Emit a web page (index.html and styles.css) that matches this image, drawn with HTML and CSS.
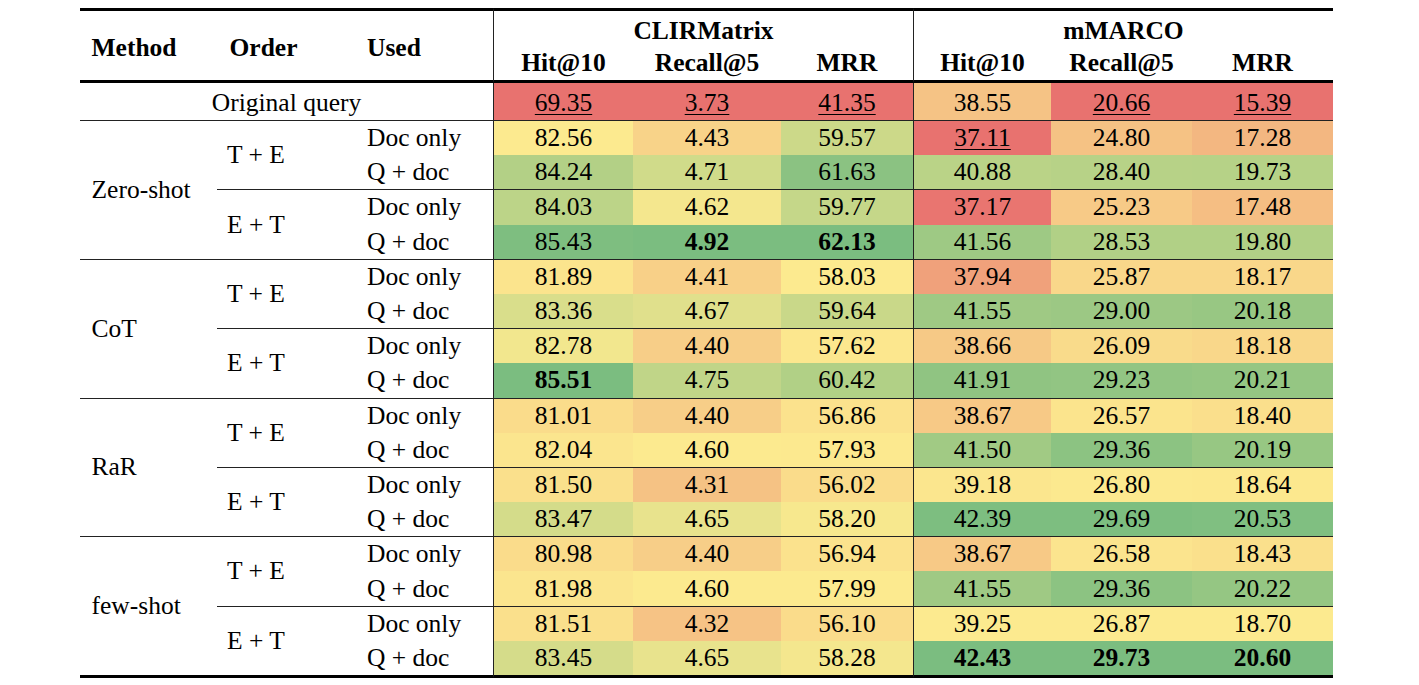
FILE: index.html
```html
<!DOCTYPE html>
<html lang="en">
<head>
<meta charset="utf-8">
<title>Results</title>
<link rel="stylesheet" href="styles.css">
</head>
<body>
<table class="results">
  <colgroup>
    <col class="c-method"><col class="c-order"><col class="c-used">
    <col class="c-hit1"><col class="c-rec1"><col class="c-mrr1">
    <col class="c-hit2"><col class="c-rec2"><col class="c-mrr2">
  </colgroup>
  <thead>
    <tr class="h1">
      <th rowspan="2" class="lbl l-method">Method</th>
      <th rowspan="2" class="lbl l-order">Order</th>
      <th rowspan="2" class="lbl l-used">Used</th>
      <th colspan="3" class="ds sep">CLIRMatrix</th>
      <th colspan="3" class="ds sep">mMARCO</th>
    </tr>
    <tr class="h2">
      <th class="sep">Hit@10</th><th>Recall@5</th><th>MRR</th>
      <th class="sep">Hit@10</th><th>Recall@5</th><th>MRR</th>
    </tr>
  </thead>
  <tbody>
    <tr class="orig">
      <td colspan="3" class="origlbl">Original query</td>
      <td class="n sep u">69.35</td><td class="n u">3.73</td><td class="n u">41.35</td>
      <td class="n sep">38.55</td><td class="n u">20.66</td><td class="n u">15.39</td>
    </tr>

    <tr class="r">
      <td rowspan="4" class="method">Zero-shot</td>
      <td rowspan="2" class="order inner">T + E</td>
      <td class="used">Doc only</td>
      <td class="n sep">82.56</td><td class="n">4.43</td><td class="n">59.57</td>
      <td class="n sep u">37.11</td><td class="n">24.80</td><td class="n">17.28</td>
    </tr>
    <tr class="r mid">
      <td class="used">Q + doc</td>
      <td class="n sep">84.24</td><td class="n">4.71</td><td class="n">61.63</td>
      <td class="n sep">40.88</td><td class="n">28.40</td><td class="n">19.73</td>
    </tr>
    <tr class="r">
      <td rowspan="2" class="order">E + T</td>
      <td class="used">Doc only</td>
      <td class="n sep">84.03</td><td class="n">4.62</td><td class="n">59.77</td>
      <td class="n sep">37.17</td><td class="n">25.23</td><td class="n">17.48</td>
    </tr>
    <tr class="r end">
      <td class="used">Q + doc</td>
      <td class="n sep">85.43</td><td class="n b">4.92</td><td class="n b">62.13</td>
      <td class="n sep">41.56</td><td class="n">28.53</td><td class="n">19.80</td>
    </tr>

    <tr class="r">
      <td rowspan="4" class="method">CoT</td>
      <td rowspan="2" class="order inner">T + E</td>
      <td class="used">Doc only</td>
      <td class="n sep">81.89</td><td class="n">4.41</td><td class="n">58.03</td>
      <td class="n sep">37.94</td><td class="n">25.87</td><td class="n">18.17</td>
    </tr>
    <tr class="r mid">
      <td class="used">Q + doc</td>
      <td class="n sep">83.36</td><td class="n">4.67</td><td class="n">59.64</td>
      <td class="n sep">41.55</td><td class="n">29.00</td><td class="n">20.18</td>
    </tr>
    <tr class="r">
      <td rowspan="2" class="order">E + T</td>
      <td class="used">Doc only</td>
      <td class="n sep">82.78</td><td class="n">4.40</td><td class="n">57.62</td>
      <td class="n sep">38.66</td><td class="n">26.09</td><td class="n">18.18</td>
    </tr>
    <tr class="r end">
      <td class="used">Q + doc</td>
      <td class="n sep b">85.51</td><td class="n">4.75</td><td class="n">60.42</td>
      <td class="n sep">41.91</td><td class="n">29.23</td><td class="n">20.21</td>
    </tr>

    <tr class="r">
      <td rowspan="4" class="method">RaR</td>
      <td rowspan="2" class="order inner">T + E</td>
      <td class="used">Doc only</td>
      <td class="n sep">81.01</td><td class="n">4.40</td><td class="n">56.86</td>
      <td class="n sep">38.67</td><td class="n">26.57</td><td class="n">18.40</td>
    </tr>
    <tr class="r mid">
      <td class="used">Q + doc</td>
      <td class="n sep">82.04</td><td class="n">4.60</td><td class="n">57.93</td>
      <td class="n sep">41.50</td><td class="n">29.36</td><td class="n">20.19</td>
    </tr>
    <tr class="r">
      <td rowspan="2" class="order">E + T</td>
      <td class="used">Doc only</td>
      <td class="n sep">81.50</td><td class="n">4.31</td><td class="n">56.02</td>
      <td class="n sep">39.18</td><td class="n">26.80</td><td class="n">18.64</td>
    </tr>
    <tr class="r end">
      <td class="used">Q + doc</td>
      <td class="n sep">83.47</td><td class="n">4.65</td><td class="n">58.20</td>
      <td class="n sep">42.39</td><td class="n">29.69</td><td class="n">20.53</td>
    </tr>

    <tr class="r">
      <td rowspan="4" class="method last-cell">few-shot</td>
      <td rowspan="2" class="order inner">T + E</td>
      <td class="used">Doc only</td>
      <td class="n sep">80.98</td><td class="n">4.40</td><td class="n">56.94</td>
      <td class="n sep">38.67</td><td class="n">26.58</td><td class="n">18.43</td>
    </tr>
    <tr class="r mid">
      <td class="used">Q + doc</td>
      <td class="n sep">81.98</td><td class="n">4.60</td><td class="n">57.99</td>
      <td class="n sep">41.55</td><td class="n">29.36</td><td class="n">20.22</td>
    </tr>
    <tr class="r">
      <td rowspan="2" class="order last-cell">E + T</td>
      <td class="used">Doc only</td>
      <td class="n sep">81.51</td><td class="n">4.32</td><td class="n">56.10</td>
      <td class="n sep">39.25</td><td class="n">26.87</td><td class="n">18.70</td>
    </tr>
    <tr class="r last">
      <td class="used">Q + doc</td>
      <td class="n sep">83.45</td><td class="n">4.65</td><td class="n">58.28</td>
      <td class="n sep b">42.43</td><td class="n b">29.73</td><td class="n b">20.60</td>
    </tr>
  </tbody>
</table>
<script src="script.js"></script>
</body>
</html>
```

FILE: styles.css
```css
body {
  margin: 0;
  padding: 8px 0 0 80px;
  background: #fff;
  color: #000;
  font-family: "Liberation Serif", "Times New Roman", serif;
  font-size: 25.5px;
}

.results {
  border-collapse: separate;
  border-spacing: 0;
  table-layout: fixed;
  width: 1253px;
}

.c-method { width: 137px; }
.c-order  { width: 139px; }
.c-used   { width: 137px; }
.c-hit1   { width: 140px; }
.c-rec1   { width: 148px; }
.c-mrr1   { width: 132px; }
.c-hit2   { width: 138px; }
.c-rec2   { width: 141px; }
.c-mrr2   { width: 141px; }

.results th,
.results td {
  padding: 0;
  box-sizing: border-box;
  white-space: nowrap;
  line-height: 28px;
  vertical-align: middle;
}

.results th {
  font-weight: bold;
  text-align: center;
}

/* header */
.h1 { height: 39px; }
.h2 { height: 36px; }

.h1 th { border-top: 3px solid #000; }
.h1 th.ds { vertical-align: bottom; padding-bottom: 2px; }
.h2 th { border-bottom: 3px solid #000; vertical-align: top; padding-top: 2px; }

.lbl {
  text-align: left;
  border-bottom: 3px solid #000;
  padding-top: 4px;
}
.results th.l-method { text-align: left; padding-left: 11.5px; padding-top: 4px; }
.results th.l-order  { text-align: left; padding-left: 12.5px; padding-top: 4px; }
.results th.l-used   { text-align: left; padding-left: 11px; padding-top: 4px; }

.sep { border-left: 1px solid #222; }

/* body */
.orig { height: 38px; }
.orig td { border-bottom: 1px solid #222; padding-top: 3px; }
.origlbl { text-align: center; }

.r { height: 34.19px; }
.r.mid, .r.end { height: 35.19px; }
.r.last { height: 37.19px; }

.mid td, .end td { border-bottom: 1px solid #222; }
.last td { border-bottom: 3px solid #000; }

.results td.method { padding-left: 11.5px; border-bottom: 1px solid #222; }
.results td.order { padding-left: 10px; border-bottom: 1px solid #222; }
.results td.last-cell { border-bottom: 3px solid #000; }
.results td.used { padding-left: 11px; }

.n { text-align: center; }
.b { font-weight: bold; }
.u {
  text-decoration: underline;
  text-decoration-thickness: 1.3px;
  text-underline-offset: 3px;
}
```

FILE: script.js
```js
(function () {
  var red = [232, 114, 111];
  var yel = [252, 234, 143];
  var grn = [123, 189, 128];
  var rows = document.querySelectorAll('.results tbody tr');
  var cols = [[], [], [], [], [], []];
  rows.forEach(function (r) {
    r.querySelectorAll('td.n').forEach(function (td, i) { cols[i].push(td); });
  });
  cols.forEach(function (cells) {
    var vals = cells.map(function (c) { return parseFloat(c.textContent); });
    var s = vals.slice().sort(function (a, b) { return a - b; });
    var min = s[0], max = s[s.length - 1];
    var rank = 0.5 * (s.length - 1);
    var lo = Math.floor(rank), hi = Math.ceil(rank);
    var mid = s[lo] + (s[hi] - s[lo]) * (rank - lo);
    cells.forEach(function (c, k) {
      var v = vals[k], a, b, t;
      if (v <= mid) { a = red; b = yel; t = mid === min ? 1 : (v - min) / (mid - min); }
      else { a = yel; b = grn; t = (v - mid) / (max - mid); }
      var rgb = a.map(function (x, j) { return Math.round(x + (b[j] - x) * t); });
      c.style.backgroundColor = 'rgb(' + rgb.join(',') + ')';
    });
  });
})();
```
